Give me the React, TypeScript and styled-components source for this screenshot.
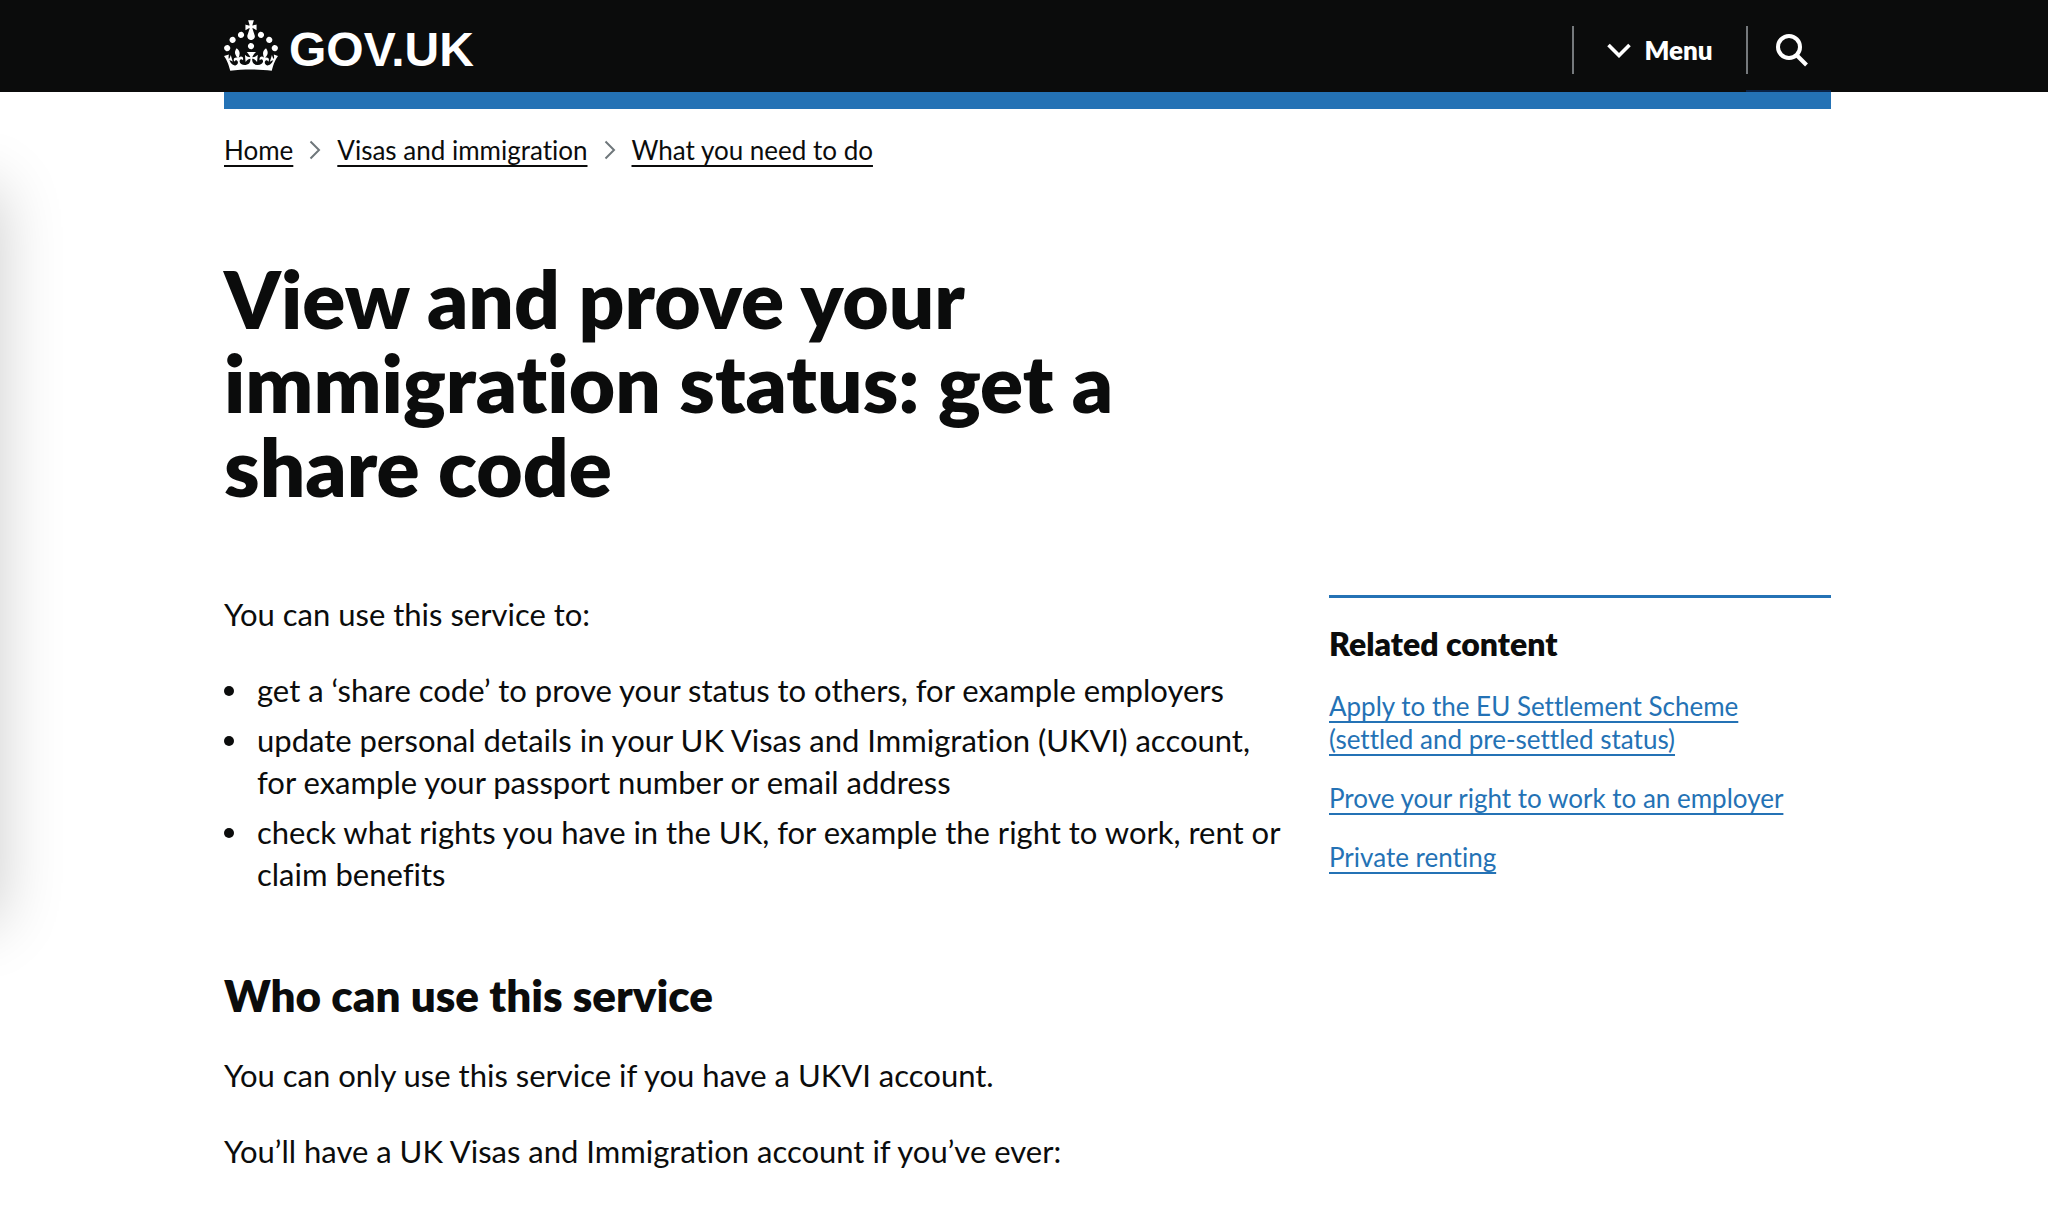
import React from "react";
import styled, { createGlobalStyle } from "styled-components";

const ink = "#0b0c0c";
const blue = "#2472b5";
const sans = '"Lato", "Noto Sans", "Liberation Sans", sans-serif';

const GlobalStyle = createGlobalStyle`
  *, *::before, *::after { box-sizing: border-box; }
  body {
    margin: 0;
    background: #fff;
    color: ${ink};
    font-family: ${sans};
    font-variant-ligatures: none;
  }
  h1, h2, p, ul, ol { margin: 0; padding: 0; }
`;

const Page = styled.div`
  overflow-x: hidden;
`;

const EdgeShadow = styled.div`
  position: absolute;
  top: 188px;
  left: -200px;
  width: 200px;
  height: 734px;
  box-shadow: 0 0 60px rgba(0, 0, 0, 0.2);
  pointer-events: none;
`;

const Wrap = styled.div`
  max-width: 1607px;
  margin: 0 auto;
`;

const Gutter = styled.div`
  padding: 0 0 0 7px;
`;

const Header = styled.header`
  background: ${ink};
  color: #fff;
`;

const HeaderRow = styled(Wrap)`
  display: flex;
  justify-content: space-between;
  align-items: stretch;
  height: 92px;
`;

const Brand = styled.a`
  display: flex;
  align-items: center;
  gap: 11px;
  padding-bottom: 2px;
  color: #fff;
  text-decoration: none;
`;

const Crown = styled.svg`
  width: 54px;
  height: 51px;
  fill: currentColor;
`;

const BrandName = styled.span`
  font: 700 48px/60px "Liberation Sans", Arial, sans-serif;
  padding-top: 10px;
`;

const Nav = styled.nav`
  display: flex;
`;

const NavButton = styled.button<{ $search?: boolean }>`
  display: flex;
  align-items: center;
  justify-content: center;
  gap: 13px;
  width: ${(p) => (p.$search ? 85 : 174)}px;
  padding: ${(p) => (p.$search ? "10px 0 0 7px" : "10px 0 0 2px")};
  border: 0;
  border-bottom: ${(p) => (p.$search ? "2px solid #0a2347" : "2px solid transparent")};
  background: linear-gradient(#75797c, #75797c) 0 26px / 2px 48px no-repeat;
  color: #fff;
  font: 800 26px/34px ${sans};
  cursor: pointer;
`;

const Strip = styled(Wrap)`
  height: 17px;
  background: ${blue};
`;

const Crumbs = styled.ol`
  display: flex;
  flex-wrap: wrap;
  align-items: center;
  gap: 16px;
  padding: 24px 0 0;
  list-style: none;
`;

const Crumb = styled.li`
  display: flex;
  align-items: center;
  gap: 16px;
  font-size: 26px;
  line-height: 34px;
`;

const TextLink = styled.a<{ $plain?: boolean }>`
  color: ${(p) => (p.$plain ? ink : blue)};
  text-decoration: underline;
  text-decoration-thickness: 2px;
  text-underline-offset: 5px;
`;

const Title = styled.h1`
  max-width: 1053px;
  margin: 89px 0 85px;
  font-size: 80px;
  line-height: 84px;
  font-weight: 800;
`;

const Columns = styled.div`
  display: grid;
  grid-template-columns: minmax(0, 1fr) 502px;
  gap: 40px;
  align-items: start;
`;

const Main = styled.main`
  font-size: 31px;
  line-height: 42px;
`;

const Para = styled.p`
  margin-bottom: 34px;
`;

const Bullets = styled.ul`
  display: grid;
  gap: 8px;
  margin-bottom: 75px;
  list-style: none;
`;

const Bullet = styled.li`
  display: grid;
  grid-template-columns: 10px minmax(0, 1fr);
  gap: 23px;

  &::before {
    content: "";
    height: 10px;
    margin-top: 17px;
    border-radius: 50%;
    background: ${ink};
  }
`;

const Section = styled.h2`
  margin-bottom: 34px;
  font-size: 44px;
  line-height: 50px;
  font-weight: 800;
`;

const Aside = styled.aside`
  margin-top: 2px;
  border-top: 3px solid ${blue};
  padding-top: 25px;
`;

const AsideTitle = styled.h2`
  margin-bottom: 25px;
  font-size: 32px;
  line-height: 42px;
  font-weight: 800;
`;

const RelatedList = styled.ul`
  display: grid;
  gap: 26px;
  padding-right: 32px;
  list-style: none;
  font-size: 26px;
  line-height: 33px;
`;

const CrumbArrow = () => (
  <svg width="12" height="20" viewBox="0 0 12 20" fill="none" stroke="#6f777b" strokeWidth="2" aria-hidden="true">
    <path d="M1.5 1.5L10 10L1.5 18.5" />
  </svg>
);

const crumbs = ["Home", "Visas and immigration", "What you need to do"];

const uses = [
  "get a ‘share code’ to prove your status to others, for example employers",
  "update personal details in your UK Visas and Immigration (UKVI) account, for example your passport number or email address",
  "check what rights you have in the UK, for example the right to work, rent or claim benefits",
];

const related = [
  "Apply to the EU Settlement Scheme (settled and pre-settled status)",
  "Prove your right to work to an employer",
  "Private renting",
];

export default function App() {
  return (
    <Page>
      <GlobalStyle />
      <Header>
        <Gutter>
          <HeaderRow>
            <Brand href="#" aria-label="GOV.UK">
              <Crown viewBox="0 0 32 30" aria-hidden="true">
                <path d="M22.6 10.4c-1 .4-2-.1-2.4-1-.4-.9.1-2 1-2.4.9-.4 2 .1 2.4 1s-.1 2-1 2.4m-5.9 6.7c-.9.4-2-.1-2.4-1-.4-.9.1-2 1-2.4.9-.4 2 .1 2.4 1s-.1 2-1 2.4m10.8-3.7c-1 .4-2-.1-2.4-1-.4-.9.1-2 1-2.4.9-.4 2 .1 2.4 1s0 2-1 2.4m3.3 4.8c-1 .4-2-.1-2.4-1-.4-.9.1-2 1-2.4.9-.4 2 .1 2.4 1s-.1 2-1 2.4M17 4.7l2.3 1.2V2.5l-2.3.7-.2-.2.9-3h-3.4l.9 3-.2.2c-.1.1-2.3-.7-2.3-.7v3.4L15 4.7c.1.1.1.2.2.2l-1.3 4c-.1.2-.1.4-.1.6 0 1.1.8 2 1.9 2.2h.7c1-.2 1.9-1.1 1.9-2.1 0-.2 0-.4-.1-.6l-1.3-4c-.1-.2 0-.2.1-.3m-7.6 5.7c.9.4 2-.1 2.4-1 .4-.9-.1-2-1-2.4-.9-.4-2 .1-2.4 1s0 2 1 2.4m-5 3c.9.4 2-.1 2.4-1 .4-.9-.1-2-1-2.4-.9-.4-2 .1-2.4 1s.1 2 1 2.4m-3.2 4.8c.9.4 2-.1 2.4-1 .4-.9-.1-2-1-2.4-.9-.4-2 .1-2.4 1s0 2 1 2.4m14.8 11c4.4 0 8.6.3 12.3.8 1.1-4.5 2.4-7 3.7-8.8l-2.5-.9c.2 1.3.3 1.9 0 2.7-.4-.4-.8-1.1-1.1-2.3l-1.2 4c.7-.5 1.3-.8 2-.9-1.1 2.5-2.6 3.1-3.5 3-1.1-.2-1.7-1.2-1.5-2.1.3-1.2 1.5-1.5 2.1-.1 1.1-2.3-.8-3-2-2.3 1.9-1.9 2.1-3.5.6-5.6-2.1 1.6-2.1 3.2-1.2 5.5-1.2-1.4-3.2-.6-2.5 1.6.9-1.4 2.1-.5 1.9.8-.2 1.1-1.7 2.1-3.5 1.9-2.7-.2-2.9-2.1-2.9-3.6.7-.1 1.9.5 2.9 1.9l.4-4.3c-1.1 1.1-2.1 1.4-3.2 1.4.4-1.2 2.1-3 2.1-3h-5.4s1.7 1.9 2.1 3c-1.1 0-2.1-.2-3.2-1.4l.4 4.3c1-1.4 2.2-2 2.9-1.9-.1 1.5-.2 3.4-2.9 3.6-1.9.2-3.4-.8-3.5-1.9-.2-1.3 1-2.2 1.9-.8.7-2.3-1.2-3-2.5-1.6.9-2.2.9-3.9-1.2-5.5-1.5 2-1.3 3.7.6 5.6-1.2-.7-3.1 0-2 2.3.6-1.4 1.8-1.1 2.1.1.2.9-.3 1.9-1.5 2.1-.9.2-2.4-.5-3.5-3 .6 0 1.2.3 2 .9l-1.2-4c-.3 1.1-.7 1.9-1.1 2.3-.3-.8-.2-1.4 0-2.7l-2.9.9C1.3 23 2.6 25.5 3.7 30c3.7-.5 7.9-.8 12.3-.8" />
              </Crown>
              <BrandName>GOV.UK</BrandName>
            </Brand>
            <Nav>
              <NavButton type="button">
                <svg width="24" height="16" viewBox="0 0 24 16" fill="none" stroke="currentColor" strokeWidth="3.6" aria-hidden="true">
                  <path d="M1.5 3L12 13.5L22.5 3" />
                </svg>
                Menu
              </NavButton>
              <NavButton type="button" $search aria-label="Search GOV.UK">
                <svg width="32" height="34" viewBox="0 0 32 34" fill="none" stroke="currentColor" strokeWidth="4" aria-hidden="true">
                  <circle cx="13" cy="14" r="11" />
                  <path d="M20.5 22L30.5 32" />
                </svg>
              </NavButton>
            </Nav>
          </HeaderRow>
        </Gutter>
      </Header>
      <Gutter>
        <Strip />
        <Wrap>
          <nav aria-label="Breadcrumb">
            <Crumbs>
              {crumbs.map((c, i) => (
                <Crumb key={c}>
                  {i > 0 && <CrumbArrow />}
                  <TextLink href="#" $plain>{c}</TextLink>
                </Crumb>
              ))}
            </Crumbs>
          </nav>
          <Title>View and prove your immigration status: get a share code</Title>
          <Columns>
            <Main>
              <Para>You can use this service to:</Para>
              <Bullets>
                {uses.map((u) => (
                  <Bullet key={u}>{u}</Bullet>
                ))}
              </Bullets>
              <Section>Who can use this service</Section>
              <Para>You can only use this service if you have a UKVI account.</Para>
              <Para>You’ll have a UK Visas and Immigration account if you’ve ever:</Para>
            </Main>
            <Aside>
              <AsideTitle>Related content</AsideTitle>
              <RelatedList>
                {related.map((r) => (
                  <li key={r}>
                    <TextLink href="#">{r}</TextLink>
                  </li>
                ))}
              </RelatedList>
            </Aside>
          </Columns>
        </Wrap>
      </Gutter>
      <EdgeShadow />
    </Page>
  );
}
